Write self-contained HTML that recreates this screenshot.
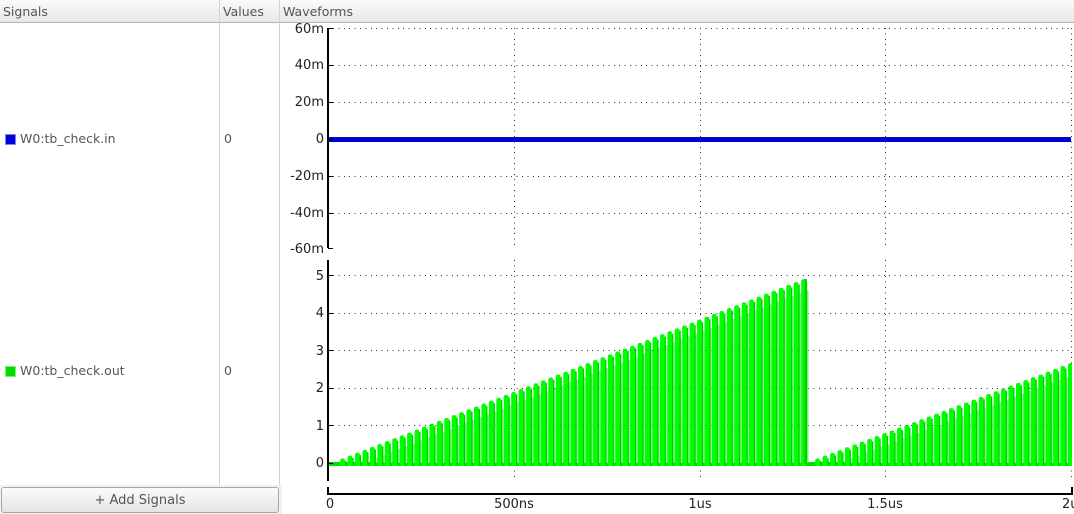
<!DOCTYPE html>
<html>
<head>
<meta charset="utf-8">
<style>
html,body{margin:0;padding:0;background:#fff}
body{width:1074px;height:514px;position:relative;overflow:hidden;font-family:"DejaVu Sans","Liberation Sans",sans-serif;font-size:12.5px;color:#555}
.abs{position:absolute;white-space:nowrap}
.hdr{position:absolute;left:0;top:0;width:1074px;height:22px;background:linear-gradient(#fafafa,#e9e8e6);border-bottom:1px solid #b8b4ae}
.sep{position:absolute;width:1px;background:#d6d4d1}
.sw{position:absolute;width:9px;height:9px;border:1px solid #d8d8d8;box-sizing:content-box}
.btn{position:absolute;left:1px;top:487px;width:276px;height:24px;border:1px solid #aaa7a2;border-radius:3px;background:linear-gradient(#fbfbfa,#e6e5e3);text-align:center;line-height:25px;color:#555;font-size:13px}
.foot{position:absolute;left:0;top:485px;width:282px;height:29px;background:#f2f1f0}
</style>
</head>
<body>
<div class="hdr"></div>
<div class="abs" style="left:3px;top:4px">Signals</div>
<div class="abs" style="left:223px;top:4px">Values</div>
<div class="abs" style="left:283px;top:4px">Waveforms</div>
<div class="sep" style="left:219px;top:0;height:485px"></div>
<div class="sep" style="left:279px;top:0;height:485px"></div>
<div class="sw" style="left:5px;top:134px;background:#0000dd;border-color:#8080ee"></div>
<div class="abs" style="left:20px;top:131px">W0:tb_check.in</div>
<div class="abs" style="left:224px;top:131px">0</div>
<div class="sw" style="left:5px;top:366px;background:#00dd00;border-color:#80ee80"></div>
<div class="abs" style="left:20px;top:363px">W0:tb_check.out</div>
<div class="abs" style="left:224px;top:363px">0</div>
<div class="foot"></div>
<div class="btn">+ Add Signals</div>
<svg id="p" width="1074" height="514" style="position:absolute;left:0;top:0" xmlns="http://www.w3.org/2000/svg">
<g id="grid" stroke="#333" stroke-width="1" stroke-dasharray="1 4.4" fill="none" shape-rendering="crispEdges">
<path d="M333 28.5H1071M333 65.5H1071M333 102.5H1071M333 176.5H1071M333 213.5H1071"/>
<path d="M333 275.5H1071M333 313.5H1071M333 350.5H1071M333 388.5H1071M333 425.5H1071"/>
<path d="M514.5 28V248M700.5 28V248M885.5 28V248M1071.5 28V248"/>
<path d="M514.5 260V480M700.5 260V480M885.5 260V480M1071.5 260V480"/>
</g>
<g id="wave"></g>
<path d="M333 350.5H1071M333 388.5H1071M333 425.5H1071" stroke="#333" stroke-width="1" stroke-dasharray="1 4.4" opacity=".3" fill="none" shape-rendering="crispEdges"/>
<rect x="329" y="137" width="742" height="5" fill="#0000dd"/>
<path d="M333 139.5H1071" stroke="#000" stroke-width="1" stroke-dasharray="2 3.4" opacity=".45" fill="none"/>
<g stroke="#000" fill="none" shape-rendering="crispEdges">
<path stroke-width="2" d="M328 28V248"/>
<path stroke-width="2" d="M328 260V481"/>
<path stroke-width="1" d="M328 28.5H333M328 65.5H333M328 102.5H333M328 139.5H333M328 176.5H333M328 213.5H333M328 248.5H333"/>
<path stroke-width="1" d="M328 275.5H333M328 313.5H333M328 350.5H333M328 388.5H333M328 425.5H333M328 463.5H333"/>
<path stroke-width="2" d="M328 487V494H1072V487"/>
</g>
<g font-family="DejaVu Sans, Liberation Sans, sans-serif" font-size="13" fill="#222" text-anchor="end">
<text x="324" y="33">60m</text>
<text x="324" y="69">40m</text>
<text x="324" y="106">20m</text>
<text x="324" y="143">0</text>
<text x="324" y="180">-20m</text>
<text x="324" y="217">-40m</text>
<text x="324" y="253">-60m</text>
<text x="324" y="280">5</text>
<text x="324" y="317">4</text>
<text x="324" y="355">3</text>
<text x="324" y="392">2</text>
<text x="324" y="430">1</text>
<text x="324" y="467">0</text>
</g>
<g font-family="DejaVu Sans, Liberation Sans, sans-serif" font-size="13" fill="#222" text-anchor="middle">
<text x="330" y="508">0</text>
<text x="514" y="508">500ns</text>
<text x="700" y="508">1us</text>
<text x="885" y="508">1.5us</text>
<text x="1062" y="508" text-anchor="start">2u</text>
</g>
</svg>
<script>
(function(){
var NS="http://www.w3.org/2000/svg",g=document.getElementById("wave");
function path(d,fill){var e=document.createElementNS(NS,"path");e.setAttribute("d",d);e.setAttribute("fill",fill);g.appendChild(e);}
function rect(x,y,w,h,fill){var e=document.createElementNS(NS,"rect");e.setAttribute("x",x);e.setAttribute("y",y);e.setAttribute("width",w);e.setAttribute("height",h);e.setAttribute("fill",fill);g.appendChild(e);}
var base=463,scale=37.6,P=7.435;
function pulse(cx,v){
  var top=base-v*scale,l=cx-2.8,r=cx+2;
  var rad=Math.min(2.2,(base-top)/2+0.5);
  if(base-top>14){rect(cx+3,top+11,P-5.8,base-top-11,"#90f090");}
  if(base-top>3){rect(r-0.5,top+2.5,1.7,base-top-0.5,"#00cc00");}
  path("M"+l+" "+(base+3)+"V"+(top+rad)+"Q"+l+" "+top+" "+(l+rad)+" "+top+"H"+(r-rad)+"Q"+r+" "+top+" "+r+" "+(top+rad)+"V"+(base+3)+"Z","#00ff00");
}
rect(329,462,478,4,"#00dd00");
rect(806,462,265,4,"#00dd00");
var i,x;
for(i=0;i<=62;i++){x=343+P*i;pulse(x,0.12+i*0.0769);}
rect(804.5,279,2.4,185,"#00d000");
for(i=0;i<=34;i++){x=818+P*i;pulse(x,0.12+i*0.0745);}
rect(1072,340,2,126,"#ffffff");
})();
</script>
</body>
</html>
